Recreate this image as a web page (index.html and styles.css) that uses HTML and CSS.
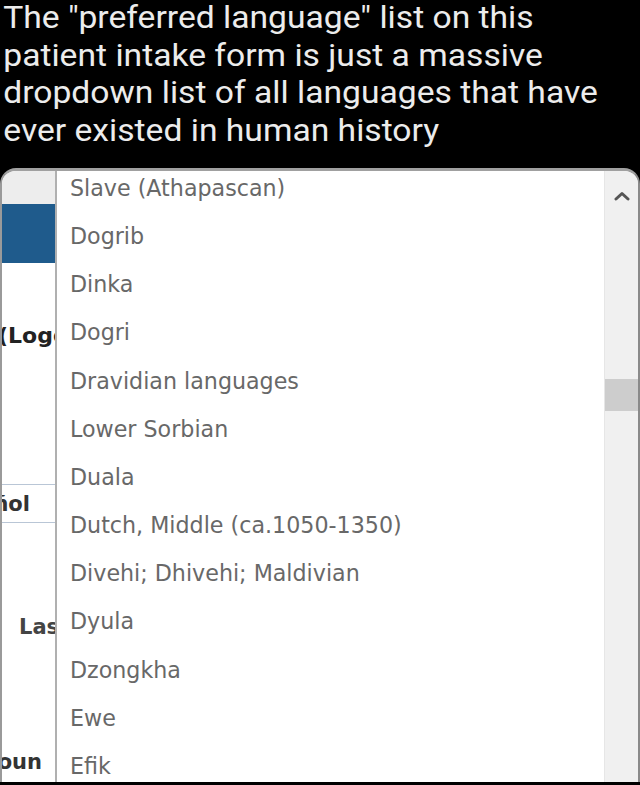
FILE: index.html
```html
<!DOCTYPE html>
<html>
<head>
<meta charset="utf-8">
<link rel="stylesheet" href="styles.css">
</head>
<body>
<div class="caption"><div class="caption-text">The "preferred language" list on this<br>patient intake form is just a massive<br>dropdown list of all languages that have<br>ever existed in human history</div></div>
<div class="card">
  <div class="form">
    <div class="strip"></div>
    <div class="banner"></div>
    <div class="label login">(Logon</div>
    <div class="field"><span>Español</span></div>
    <div class="label last">Last Name</div>
    <div class="label pron">Pronoun</div>
  </div>
  <div class="dropdown">
    <ul class="options">
      <li>Slave (Athapascan)</li>
      <li>Dogrib</li>
      <li>Dinka</li>
      <li>Dogri</li>
      <li>Dravidian languages</li>
      <li>Lower Sorbian</li>
      <li>Duala</li>
      <li>Dutch, Middle (ca.1050-1350)</li>
      <li>Divehi; Dhivehi; Maldivian</li>
      <li>Dyula</li>
      <li>Dzongkha</li>
      <li>Ewe</li>
      <li>Efik</li>
    </ul>
    <div class="scrollbar">
      <svg class="arrow" width="16" height="10" viewBox="0 0 16 10"><polyline points="2,8 8,2.5 14,8" fill="none" stroke="#555" stroke-width="3" stroke-linecap="round" stroke-linejoin="round"/></svg>
      <div class="thumb"></div>
    </div>
  </div>
</div>
</body>
</html>
```
FILE: styles.css
```css
html, body {
  margin: 0;
  padding: 0;
}
body {
  background: #000;
  width: 640px;
  height: 785px;
  overflow: hidden;
}
.caption {
  height: 168px;
  overflow: hidden;
}
.caption-text {
  font-family: Roboto, "Liberation Sans", sans-serif;
  font-size: 31px;
  line-height: 37.5px;
  color: #ececec;
  padding-left: 3px;
  white-space: nowrap;
  transform: scaleX(1.085);
  transform-origin: 0 0;
  margin-top: -1px;
}
.card {
  display: flex;
  background: #fff;
  border-top: 3px solid #a0a0a0;
  border-left: 2px solid #9a9a9a;
  border-right: 2px solid #8a8a8a;
  border-radius: 16px 16px 0 0;
  height: 614px;
  overflow: hidden;
  box-sizing: border-box;
}
.form {
  width: 53px;
  flex: none;
  overflow: hidden;
  font-family: "DejaVu Sans", Verdana, sans-serif;
  font-size: 21px;
  font-weight: bold;
  color: #333;
}
.strip {
  height: 33px;
  background: #ededed;
}
.banner {
  height: 59px;
  background: #1f5b8c;
}
.label {
  height: 30px;
  line-height: 30px;
  white-space: nowrap;
}
.login {
  margin-top: 58px;
  margin-left: -4px;
  font-size: 22px;
  color: #222;
}
.field {
  margin-top: 133px;
  height: 39px;
  border-top: 1px solid #b9c6d6;
  border-bottom: 1px solid #b9c6d6;
  box-sizing: border-box;
  display: flex;
  justify-content: flex-end;
  align-items: center;
  padding-right: 25px;
  white-space: nowrap;
}
.last {
  margin-top: 89px;
  margin-left: 17px;
  color: #444;
}
.pron {
  margin-top: 105px;
  display: flex;
  justify-content: flex-end;
  padding-right: 13px;
}
.dropdown {
  flex: 1;
  display: flex;
  border-left: 2px solid #b0b0b0;
  min-width: 0;
}
.options {
  flex: 1;
  list-style: none;
  margin: -7px 0 0 0;
  padding: 0 0 0 13px;
  font-family: "DejaVu Sans", Verdana, sans-serif;
  font-size: 22.2px;
  color: #686868;
  overflow: hidden;
}
.options li {
  height: 48.17px;
  line-height: 48px;
  white-space: nowrap;
}
.scrollbar {
  width: 33px;
  flex: none;
  background: #f0f0f0;
  border-left: 1px solid #e6e6e6;
  display: flex;
  flex-direction: column;
  align-items: center;
}
.arrow {
  margin-top: 20px;
  margin-left: 1px;
}
.thumb {
  align-self: stretch;
  margin-top: 178px;
  height: 32px;
  background: #cdcdcd;
}
```
